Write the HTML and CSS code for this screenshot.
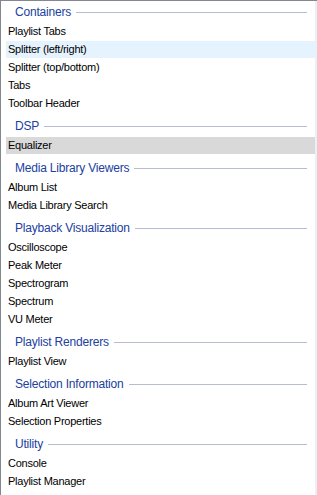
FILE: index.html
```html
<html>

<head>
    <link rel="stylesheet" href="styles.css">
</head>

<body>
    <div class="panel">
        <div class="list">

            <div class="head first"><span>Containers</span></div>
            <div class="item">Playlist Tabs</div>
            <div class="item hover">Splitter (left/right)</div>
            <div class="item">Splitter (top/bottom)</div>
            <div class="item">Tabs</div>
            <div class="item">Toolbar Header</div>

            <div class="head"><span>DSP</span></div>
            <div class="item selected">Equalizer</div>

            <div class="head"><span>Media Library Viewers</span></div>
            <div class="item">Album List</div>
            <div class="item">Media Library Search</div>

            <div class="head"><span>Playback Visualization</span></div>
            <div class="item">Oscilloscope</div>
            <div class="item">Peak Meter</div>
            <div class="item">Spectrogram</div>
            <div class="item">Spectrum</div>
            <div class="item">VU Meter</div>

            <div class="head"><span>Playlist Renderers</span></div>
            <div class="item">Playlist View</div>

            <div class="head"><span>Selection Information</span></div>
            <div class="item">Album Art Viewer</div>
            <div class="item">Selection Properties</div>

            <div class="head"><span>Utility</span></div>
            <div class="item">Console</div>
            <div class="item">Playlist Manager</div>

        </div>
        <div class="edge"></div>
    </div>
</body>

</html>
```

FILE: styles.css
```css
html, body{
    margin: 0;
    background: white;
}

body{
    width: 317px;
    height: 495px;
    overflow: hidden;
}

.panel{
    display: flex;
    height: 494px;
    border-top: 1px solid #828790;
    border-left: 1px solid #828790;
}

.list{
    flex: 1;
    padding-left: 5px;
}

.edge{
    width: 2px;
    background: #eaf0f9;
}

.head{
    display: flex;
    align-items: center;
    height: 21px;
    margin-top: 3px;
    padding-left: 9px;
    color: #2140a0;
    font-family: 'Liberation Sans', Arial, sans-serif;
    font-size: 12px;
    letter-spacing: -0.2px;
}

.head.first{
    margin-top: 0;
}

.head::after{
    content: "";
    flex: 1;
    height: 1px;
    margin: 1px 8px 0 5px;
    background: #b7bdd0;
}

.item{
    height: 17px;
    margin-top: 1px;
    padding-left: 2px;
    line-height: 17px;
    color: black;
    font-family: 'Liberation Sans', Arial, sans-serif;
    font-size: 11px;
    letter-spacing: -0.25px;
}

.hover{
    background: #e5f3ff;
}

.selected{
    background: #d9d9d9;
}
```
